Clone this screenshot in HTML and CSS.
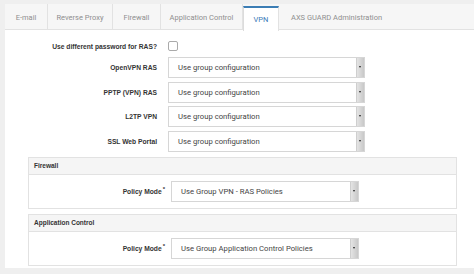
FILE: index.html
```html
<!DOCTYPE html>
<html>
<head>
<meta charset="utf-8">
<link rel="stylesheet" href="styles.css">
</head>
<body>
<div class="page">
  <div class="tabs">
    <div class="tab">E-mail</div>
    <div class="tab">Reverse Proxy</div>
    <div class="tab">Firewall</div>
    <div class="tab">Application Control</div>
    <div class="tab active">VPN</div>
    <div class="tab plain">AXS GUARD Administration</div>
  </div>
  <div class="panel">
    <div class="row check-row">
      <div class="label">Use different password for RAS?</div>
      <div class="checkbox"></div>
    </div>
    <div class="row">
      <div class="label">OpenVPN RAS</div>
      <div class="select"><span class="value">Use group configuration</span><span class="arrow"></span></div>
    </div>
    <div class="row">
      <div class="label">PPTP (VPN) RAS</div>
      <div class="select"><span class="value">Use group configuration</span><span class="arrow"></span></div>
    </div>
    <div class="row">
      <div class="label">L2TP VPN</div>
      <div class="select"><span class="value">Use group configuration</span><span class="arrow"></span></div>
    </div>
    <div class="row">
      <div class="label">SSL Web Portal</div>
      <div class="select"><span class="value">Use group configuration</span><span class="arrow"></span></div>
    </div>

    <div class="box">
      <div class="box-head">Firewall</div>
      <div class="box-body">
        <div class="label2">Policy Mode<sup>*</sup></div>
        <div class="select small"><span class="value">Use Group VPN - RAS Policies</span><span class="arrow"></span></div>
      </div>
    </div>
    <div class="box">
      <div class="box-head">Application Control</div>
      <div class="box-body">
        <div class="label2">Policy Mode<sup>*</sup></div>
        <div class="select small"><span class="value">Use Group Application Control Policies</span><span class="arrow"></span></div>
      </div>
    </div>
  </div>
</div>
</body>
</html>
```

FILE: styles.css
```css
html, body {
  margin: 0;
  padding: 0;
  background: #efefef;
  width: 474px;
  height: 274px;
  overflow: hidden;
}
.page {
  padding: 4px 0 0 5px;
}
.tabs {
  display: flex;
  height: 26px;
  background: #f6f6f6;
  border-bottom: 1px solid #e2e2e2;
  box-sizing: border-box;
}
.tab {
  font-family: Roboto, "Liberation Sans", sans-serif;
  font-size: 7.5px;
  color: #8f8f8f;
  padding: 0 11px;
  display: flex;
  align-items: center;
  border-right: 1px solid #e2e2e2;
  box-sizing: border-box;
  height: 26px;
}
.tab:first-child { width: 43px; justify-content: center; padding: 0; }
.tab:nth-child(2) { width: 65px; justify-content: center; padding: 0; }
.tab:nth-child(3) { width: 48px; justify-content: center; padding: 0; }
.tab:nth-child(4) { width: 82px; justify-content: center; padding: 0; }
.tab.active {
  background: #fff;
  color: #3a7ab8;
  width: 36px;
  justify-content: center;
  padding: 0;
  border-top: 2px solid #3b7db4;
  border-left: 1px solid #dcdcdc;
  margin-top: 2px;
  height: 25px;
  margin-bottom: -1px;
}
.tab.plain { border-right: none; padding-left: 12px; }
.panel {
  background: #fff;
  height: 238px;
  box-sizing: border-box;
  padding-top: 11px;
}
.row {
  display: flex;
  align-items: center;
  height: 21px;
  margin-bottom: 3.5px;
}
.check-row { height: 10px; margin-bottom: 6px; }
.label {
  width: 152px;
  text-align: right;
  font-family: "Liberation Sans", Arial, sans-serif;
  font-weight: bold;
  font-size: 6.7px;
  color: #333;
  margin-right: 11px;
}
.checkbox {
  width: 8px;
  height: 8px;
  border: 1px solid #aaa;
  border-radius: 2px;
  background: #fff;
}
.select {
  width: 197px;
  height: 21px;
  box-sizing: border-box;
  border: 1px solid #d6d6d6;
  display: flex;
  align-items: center;
  justify-content: space-between;
  background: #fff;
}
.select .value {
  font-family: Roboto, "Liberation Sans", sans-serif;
  font-size: 7.7px;
  color: #444;
  padding-left: 9px;
}
.arrow {
  width: 7px;
  height: 19px;
  background: linear-gradient(to right, #e4e4e4, #c8c8c8);
  border-left: 1px solid #cfcfcf;
  position: relative;
}
.arrow::after {
  content: "";
  position: absolute;
  left: 2px;
  top: 8px;
  width: 0;
  height: 0;
  border-left: 1.5px solid transparent;
  border-right: 1.5px solid transparent;
  border-top: 2px solid #222;
}
.box {
  margin-left: 23px;
  width: 429px;
  border: 1px solid #e2e2e2;
  box-sizing: border-box;
  margin-top: 5px;
}
.box + .box { margin-top: 5px; }
.box-head {
  height: 16px;
  background: #f5f5f5;
  border-bottom: 1px solid #e2e2e2;
  font-family: "Liberation Sans", Arial, sans-serif;
  font-weight: bold;
  font-size: 6.5px;
  color: #333;
  display: flex;
  align-items: center;
  padding-left: 5px;
}
.box-body {
  height: 33px;
  display: flex;
  align-items: center;
}
.label2 {
  width: 136px;
  text-align: right;
  font-family: "Liberation Sans", Arial, sans-serif;
  font-weight: bold;
  font-size: 6.7px;
  color: #333;
  margin-right: 6px;
}
.label2 sup {
  font-size: 6px;
  vertical-align: top;
  position: relative;
  top: -2px;
  margin-left: 1px;
}
.select.small {
  width: 188px;
}
```
